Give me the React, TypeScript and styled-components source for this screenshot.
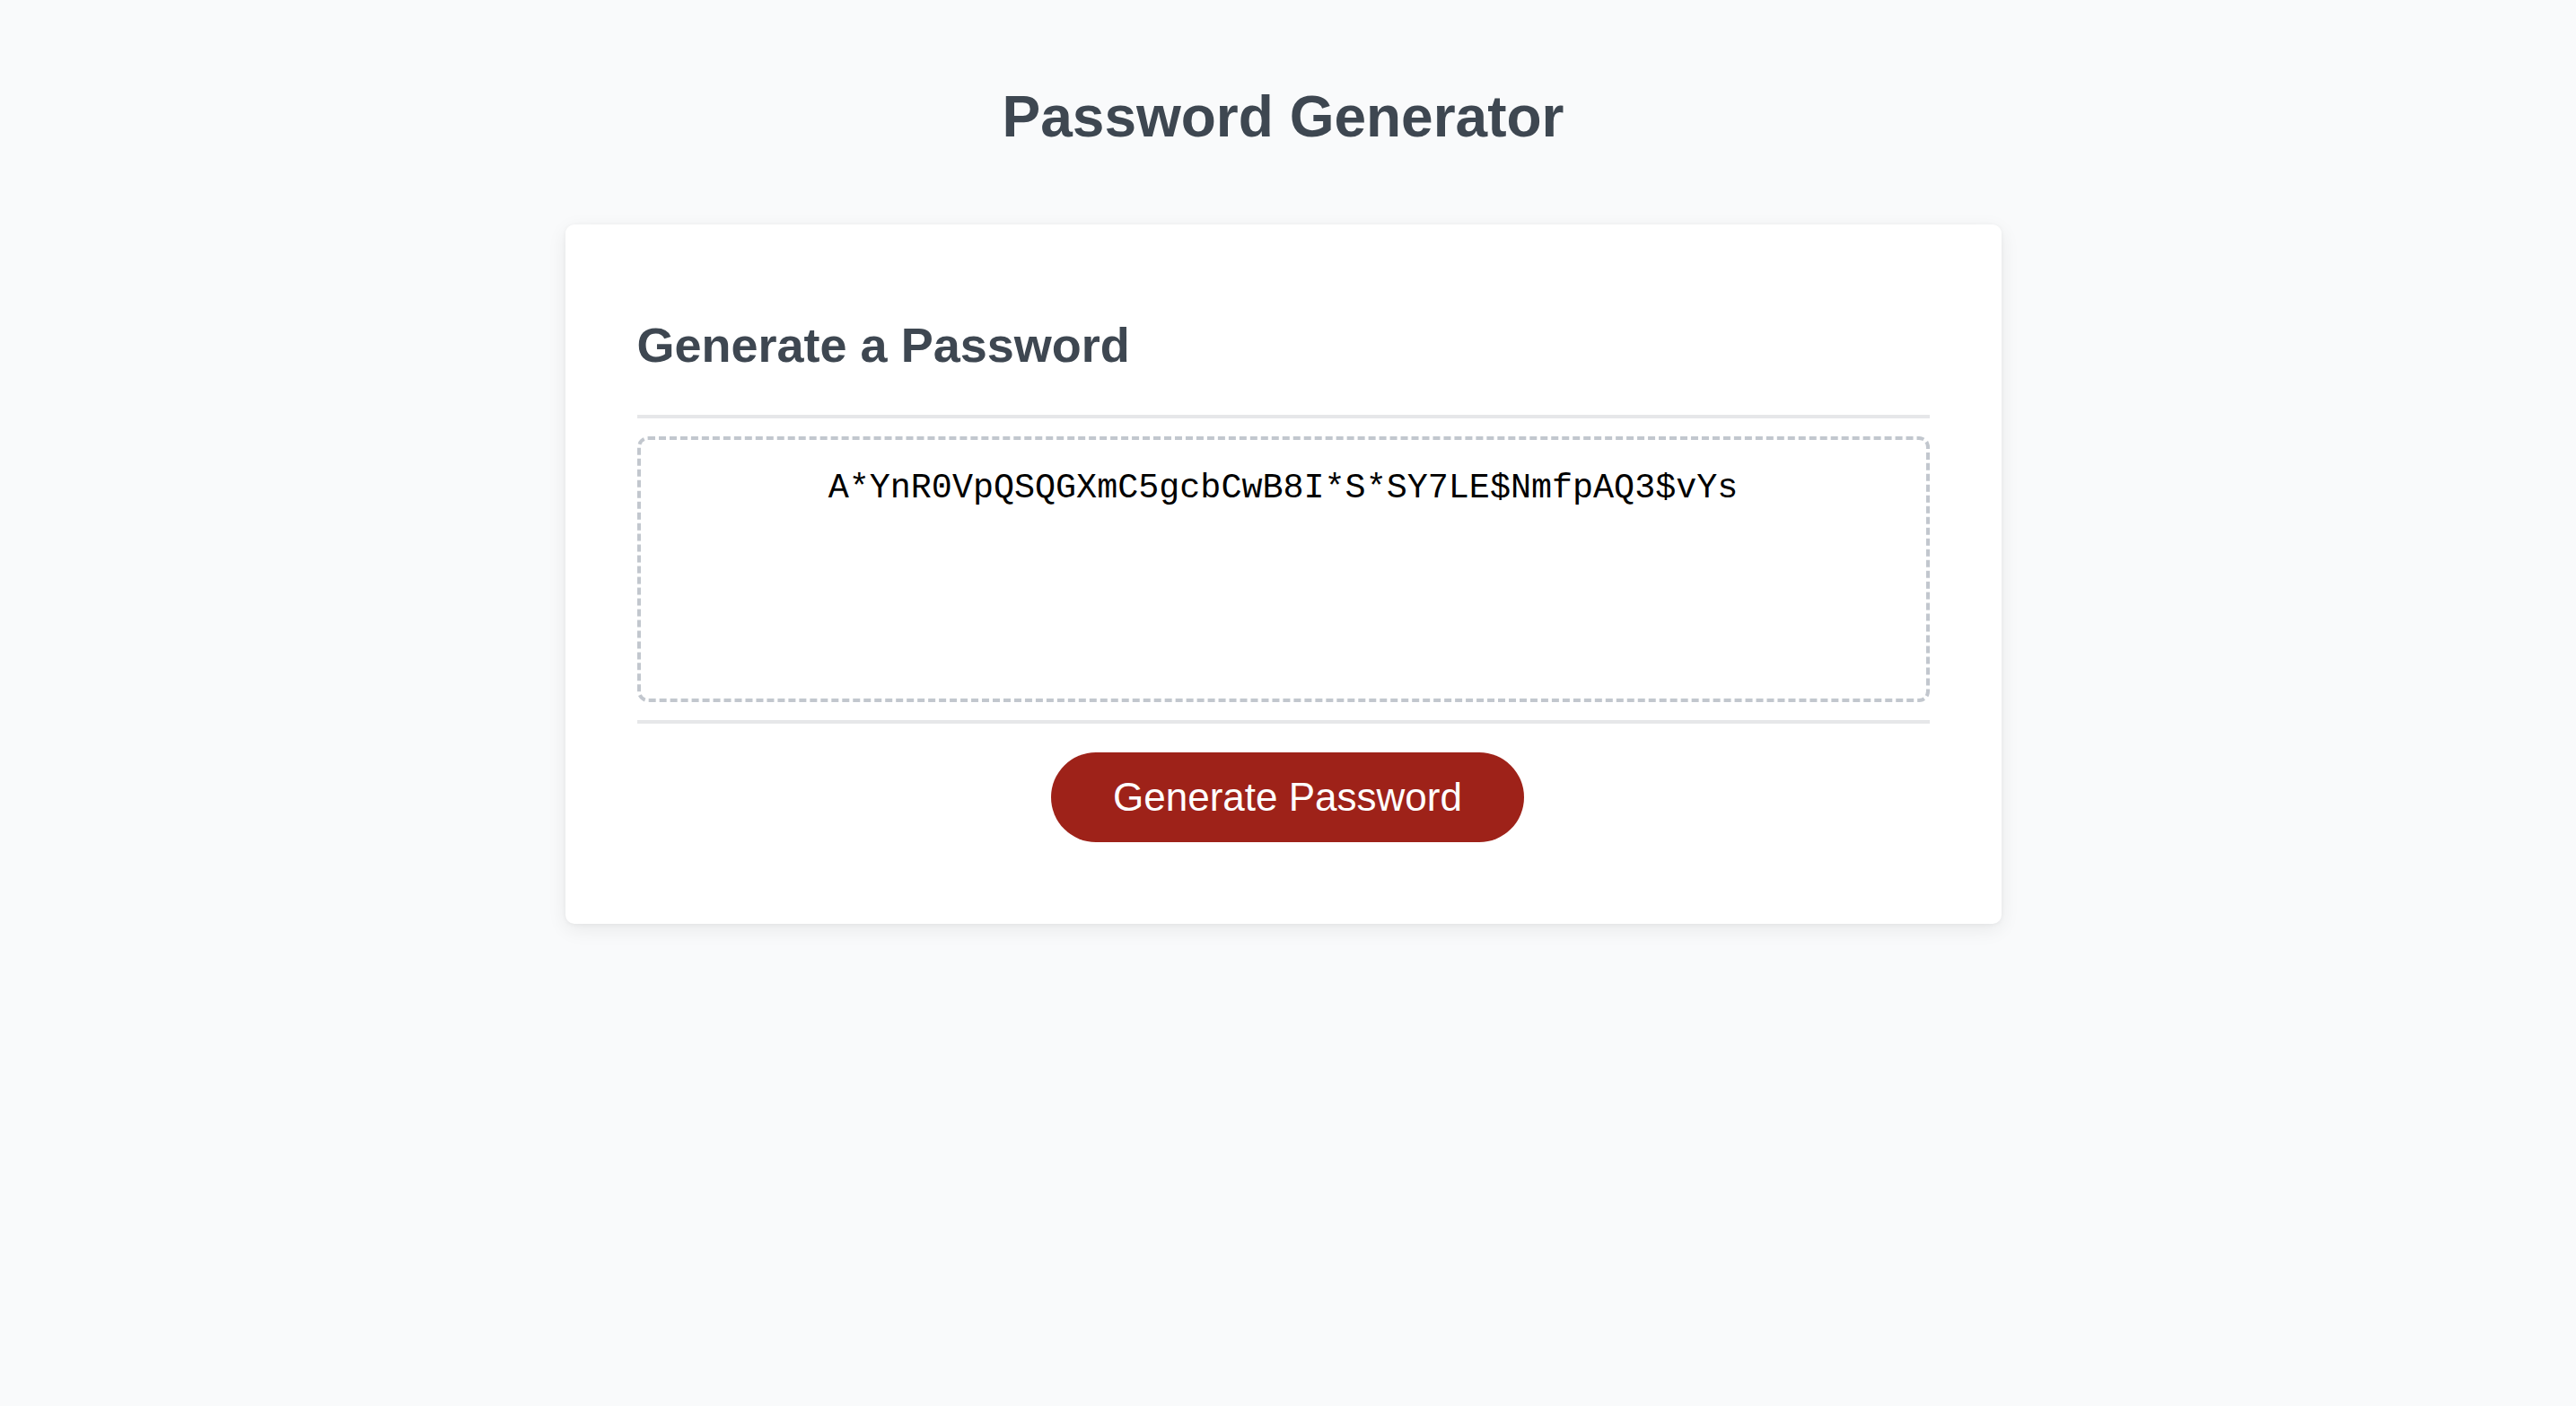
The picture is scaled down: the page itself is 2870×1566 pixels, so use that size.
import React from "react";
import styled, { createGlobalStyle } from "styled-components";

const GlobalStyle = createGlobalStyle`
  html, body {
    margin: 0;
    padding: 0;
    background: #f9fafb;
  }
  body {
    font-family: "Liberation Sans", Arial, Helvetica, sans-serif;
  }
  * { box-sizing: border-box; }
`;

const Page = styled.main`
  min-height: 1566px;
  padding: 0 11px 0 0;
  display: flex;
  flex-direction: column;
  align-items: center;
`;

const Title = styled.h1`
  margin: 93px 0 0;
  font-family: "Liberation Sans", Arial, Helvetica, sans-serif;
  font-size: 64px;
  line-height: 74px;
  font-weight: 700;
  color: #3e4751;
  text-align: center;
`;

const Card = styled.section`
  margin-top: 83px;
  width: 1600px;
  background: #ffffff;
  border-radius: 10px;
  padding: 102px 80px 91px;
  box-shadow: 0 6px 22px rgba(0, 0, 0, 0.07), 0 1px 5px rgba(0, 0, 0, 0.05);
  display: flex;
  flex-direction: column;
`;

const CardHeading = styled.h2`
  margin: 0;
  font-family: "Liberation Sans", Arial, Helvetica, sans-serif;
  font-size: 54px;
  line-height: 64px;
  font-weight: 700;
  color: #3e4751;
`;

const Divider = styled.hr<{ $top: number }>`
  margin: ${(p) => p.$top}px 0 0;
  height: 4px;
  border: none;
  background: #e6e7e9;
`;

const PasswordBox = styled.textarea`
  display: block;
  margin-top: 20px;
  width: 100%;
  height: 296px;
  padding: 32px 20px;
  border: 4px dashed #c2c7ce;
  border-radius: 12px;
  resize: none;
  outline: none;
  background: #ffffff;
  color: #000000;
  font-family: "Liberation Mono", "Courier New", monospace;
  font-size: 38.4px;
  line-height: normal;
  text-align: center;
  overflow: hidden;
`;

const ButtonRow = styled.div`
  display: flex;
  justify-content: center;
  margin-top: 32px;
`;

const GenerateButton = styled.button`
  margin-left: 10px;
  height: 100px;
  padding: 0 69px;
  border: none;
  border-radius: 50px;
  background: #9e2219;
  color: #ffffff;
  font-family: "Liberation Sans", Arial, Helvetica, sans-serif;
  font-size: 44px;
  font-weight: 400;
  display: flex;
  align-items: center;
  justify-content: center;
  cursor: pointer;
`;

const CHARS =
  "ABCDEFGHIJKLMNOPQRSTUVWXYZabcdefghijklmnopqrstuvwxyz0123456789!@#$%^&*";

export default function App() {
  const [password, setPassword] = React.useState(
    "A*YnR0VpQSQGXmC5gcbCwB8I*S*SY7LE$NmfpAQ3$vYs"
  );

  const generate = () => {
    let out = "";
    for (let i = 0; i < 44; i++) {
      out += CHARS[Math.floor(Math.random() * CHARS.length)];
    }
    setPassword(out);
  };

  return (
    <>
      <GlobalStyle />
      <Page>
        <Title>Password Generator</Title>
        <Card>
          <CardHeading>Generate a Password</CardHeading>
          <Divider $top={46} />
          <PasswordBox
            readOnly
            spellCheck={false}
            value={password}
            aria-label="Generated Password"
          />
          <Divider $top={20} />
          <ButtonRow>
            <GenerateButton type="button" onClick={generate}>
              Generate Password
            </GenerateButton>
          </ButtonRow>
        </Card>
      </Page>
    </>
  );
}
